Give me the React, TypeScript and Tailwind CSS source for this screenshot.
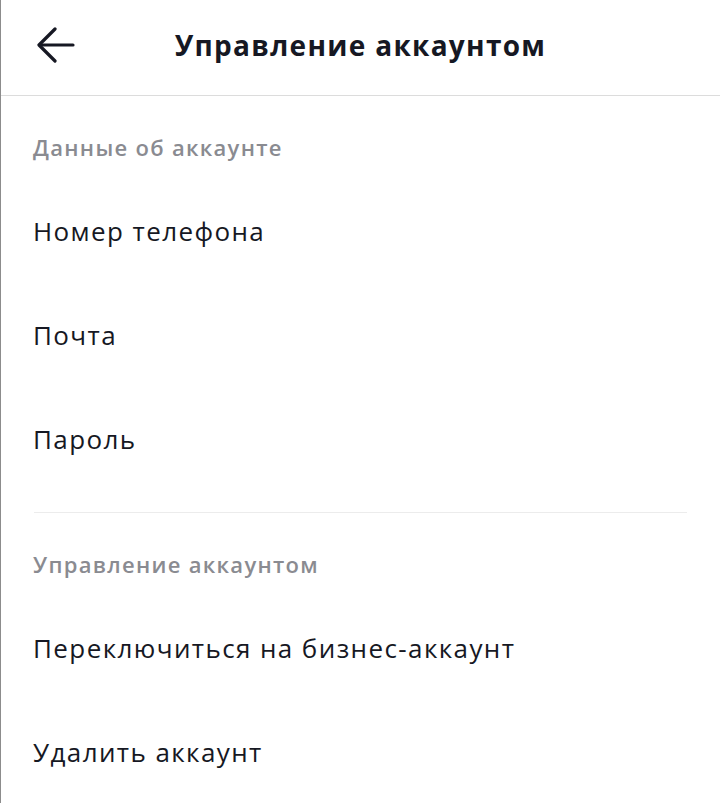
import React from 'react';

const font = { fontFamily: '"Open Sans", "Liberation Sans", sans-serif' };

const SectionTitle: React.FC<{ title: string }> = ({ title }) => (
  <div className="pt-[36px] pb-[17px] px-[32px]">
    <div className="h-[30px] flex items-center text-[22px] font-semibold tracking-[1.3px] text-[#8a8b91]">{title}</div>
  </div>
);

const Row: React.FC<{ label: string }> = ({ label }) => (
  <div className="h-[104px] flex items-center px-[32px] text-[26px] tracking-[1.4px] text-[#161823]">{label}</div>
);

export default function App() {
  return (
    <div className="w-[720px] h-[803px] bg-white border-l border-[#8c8c8c] overflow-hidden" style={font}>
      <div className="h-[96px] relative flex items-center justify-center border-b border-[#dcdcdc]">
        <button className="absolute left-[36px] top-[26px] text-[#161823]">
          <svg width="38" height="38" viewBox="0 0 38 38" fill="none" stroke="currentColor" strokeWidth="3.2" strokeLinecap="round" strokeLinejoin="round">
            <path d="M36 19H3" />
            <path d="M18 3L2 19l16 16" />
          </svg>
        </button>
        <h1 className="-mt-[5px] text-[28px] font-bold tracking-[1.3px] text-[#161823]">Управление аккаунтом</h1>
      </div>

      <SectionTitle title="Данные об аккаунте" />
      <Row label="Номер телефона" />
      <Row label="Почта" />
      <Row label="Пароль" />

      <div className="mt-[21px] mx-[33px] h-px bg-[#ececec]" />

      <SectionTitle title="Управление аккаунтом" />
      <Row label="Переключиться на бизнес-аккаунт" />
      <Row label="Удалить аккаунт" />
    </div>
  );
}
